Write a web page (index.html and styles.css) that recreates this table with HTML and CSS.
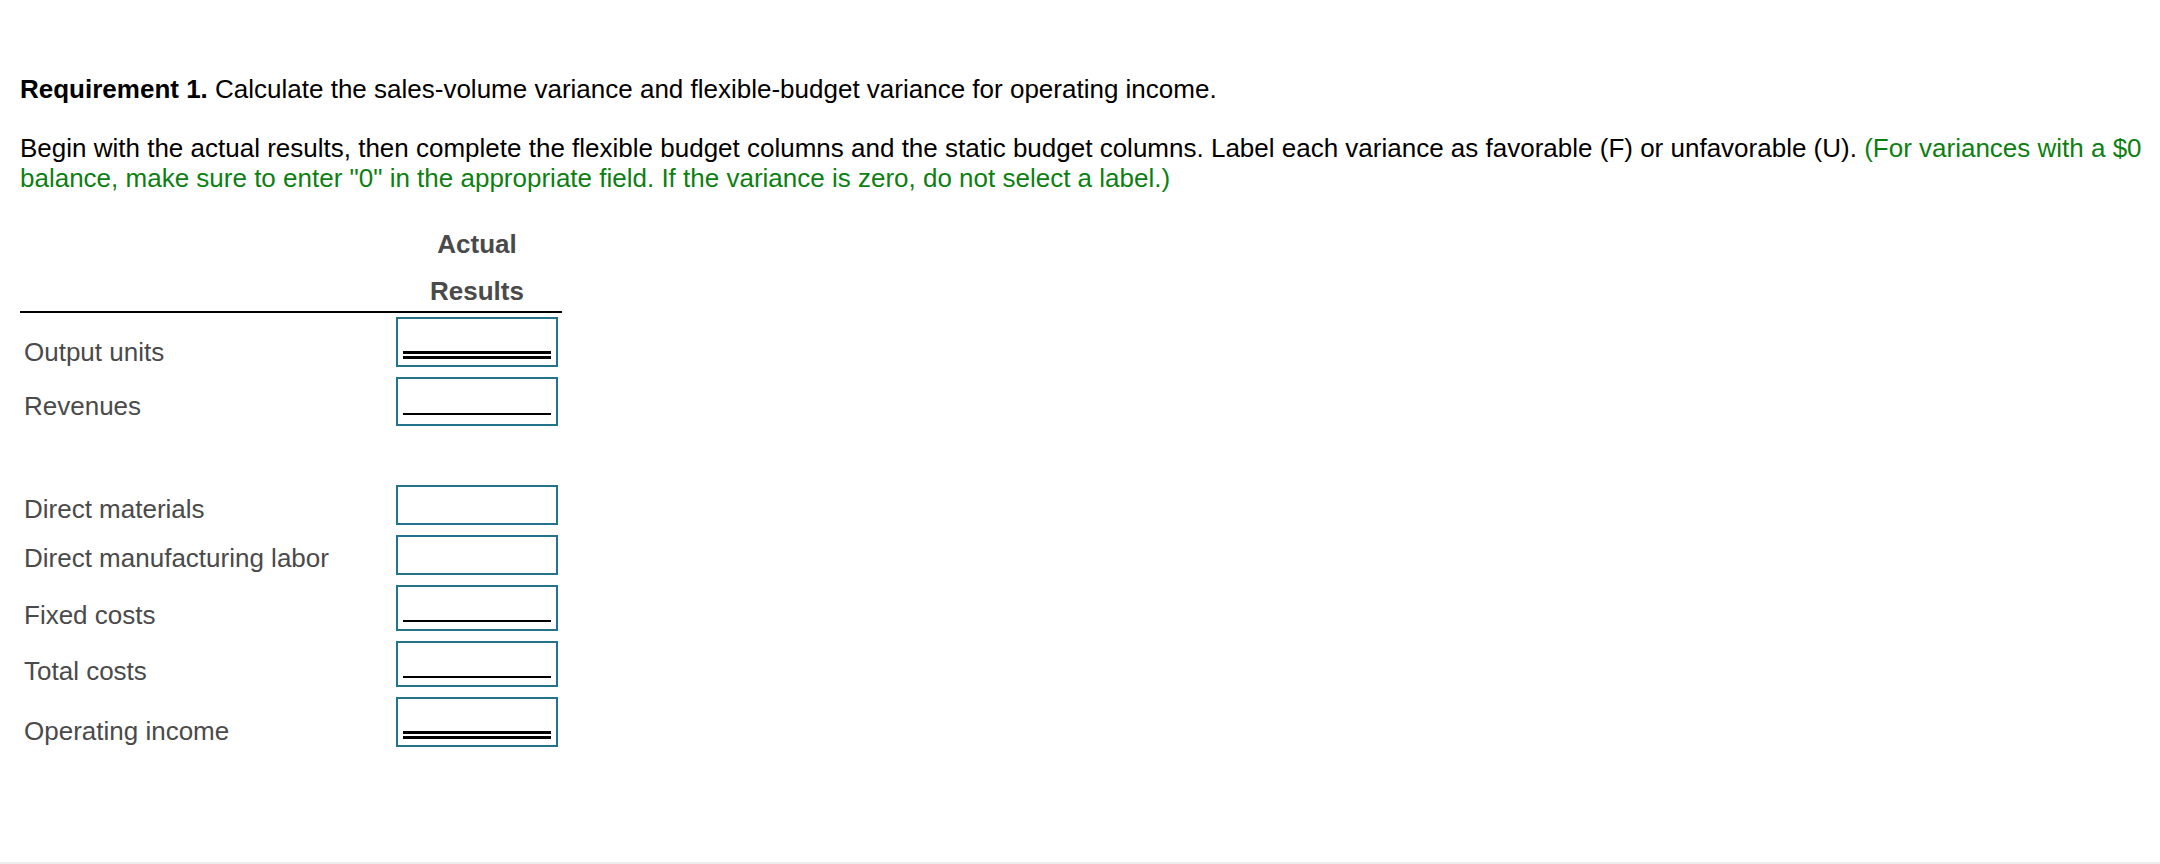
FILE: index.html
```html
<!DOCTYPE html>
<html lang="en">
<head>
<meta charset="utf-8">
<title>Requirement 1</title>
<link rel="stylesheet" href="styles.css">
</head>
<body>
<main class="page">
  <p class="req"><strong>Requirement 1.</strong> Calculate the sales-volume variance and flexible-budget variance for operating income.</p>
  <p class="instr">Begin with the actual results, then complete the flexible budget columns and the static budget columns. Label each variance as favorable (F) or unfavorable (U). <span class="hint">(For variances with a $0 balance, make sure to enter "0" in the appropriate field. If the variance is zero, do not select a label.)</span></p>

  <div class="table">
    <div class="thead">
      <div class="lab"></div>
      <div class="val colhead">
        <div class="h1">Actual</div>
        <div class="h2">Results</div>
      </div>
    </div>
    <div class="tbody">
      <div class="row">
        <div class="lab pb0">Output units</div>
        <div class="val"><div class="box"><div class="field f-double"></div></div></div>
      </div>
      <div class="row">
        <div class="lab pb5">Revenues</div>
        <div class="val"><div class="box"><div class="field f-single f-tall"></div></div></div>
      </div>
      <div class="row spacer"></div>
      <div class="row">
        <div class="lab">Direct materials</div>
        <div class="val"><div class="box"><div class="field f-plain"></div></div></div>
      </div>
      <div class="row">
        <div class="lab pb2">Direct manufacturing labor</div>
        <div class="val"><div class="box"><div class="field f-plain"></div></div></div>
      </div>
      <div class="row">
        <div class="lab">Fixed costs</div>
        <div class="val"><div class="box"><div class="field f-single"></div></div></div>
      </div>
      <div class="row">
        <div class="lab">Total costs</div>
        <div class="val"><div class="box"><div class="field f-single"></div></div></div>
      </div>
      <div class="row">
        <div class="lab">Operating income</div>
        <div class="val"><div class="box"><div class="field f-double"></div></div></div>
      </div>
    </div>
  </div>
</main>
<footer class="foot"></footer>
</body>
</html>
```

FILE: styles.css
```css
html, body {
  margin: 0;
  padding: 0;
  background: #ffffff;
}

body {
  min-height: 864px;
  display: flex;
  flex-direction: column;
  font-family: "Liberation Sans", Arial, Helvetica, sans-serif;
  font-size: 26px;
  line-height: 30px;
  color: #000000;
}

.page {
  flex: 1;
  padding: 74px 0 0 20px;
}

.req {
  margin: 0;
}

.req strong {
  font-weight: bold;
}

.instr {
  margin: 29px 0 0;
}

.hint {
  color: #0d7f12;
}

.table {
  margin-top: 27px;
  width: 542px;
}

.thead {
  display: flex;
  border-bottom: 2px solid #000000;
}

.lab {
  width: 372px;
  box-sizing: border-box;
  padding-left: 4px;
  color: #4a4a4a;
}

.val {
  width: 170px;
  box-sizing: border-box;
  padding: 0 4px;
}

.colhead {
  text-align: center;
  font-weight: bold;
  font-size: 26px;
  line-height: 30px;
  color: #4a4a4a;
}

.colhead .h1 {
  padding: 9px 0 8px;
}

.colhead .h2 {
  padding: 9px 0 5px;
}

.tbody {
  display: flex;
  flex-direction: column;
  gap: 10px;
  padding-top: 4px;
}

.row {
  display: flex;
  align-items: flex-end;
}

.row .lab {
  padding-bottom: 1px;
}

.row .lab.pb0 {
  padding-bottom: 0;
}

.row .lab.pb2 {
  padding-bottom: 2px;
}

.row .lab.pb5 {
  padding-bottom: 5px;
}

.spacer {
  height: 39px;
}

.box {
  width: 162px;
  box-sizing: border-box;
  border: 2px solid #22738b;
  padding: 0 5px;
  background: #ffffff;
}

.field {
  margin-bottom: 7px;
}

.f-plain {
  height: 36px;
  margin-bottom: 0;
}

.f-single {
  height: 33px;
  border-bottom: 2px solid #000000;
}

.f-single.f-tall {
  height: 34px;
  margin-bottom: 9px;
}

.f-double {
  height: 32px;
  border-bottom: 8px double #000000;
  margin-bottom: 6px;
}

.foot {
  height: 2px;
  background: #ececec;
}
```
